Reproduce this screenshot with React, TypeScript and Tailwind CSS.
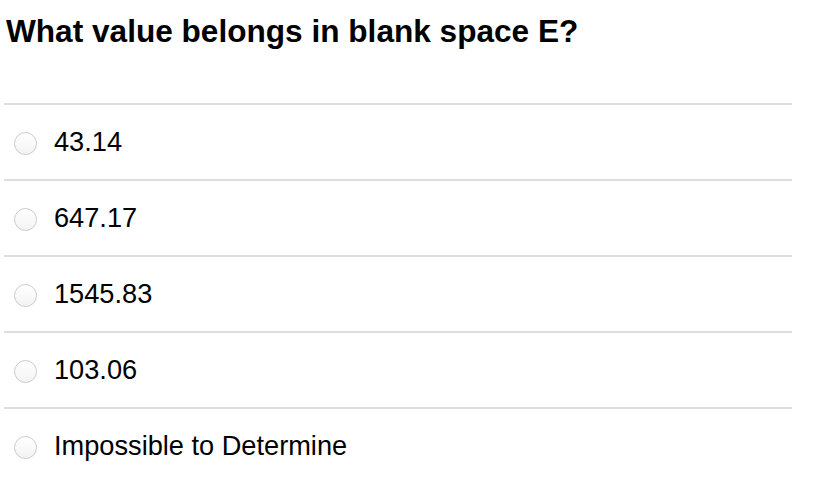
const options = ["43.14", "647.17", "1545.83", "103.06", "Impossible to Determine"];

export default function App() {
    return (
        <main className="w-[814px] h-[490px] bg-white text-black overflow-hidden font-['Liberation_Sans',Arial,sans-serif]">
            {/* Question */}
            <h1 className="pt-[13px] pl-[6px] text-[31.6px] leading-[37px] font-bold">
                What value belongs in blank space E?
            </h1>

            {/* Answers */}
            <ul className="mt-[53px] ml-1 w-[788px]">
                {options.map((opt) => (
                    <li
                        key={opt}
                        className="h-[76px] border-t-2 border-[#dedede] flex items-center"
                    >
                        <span className="ml-[10px] mt-[2px] w-[23px] h-[23px] rounded-full border border-[#cbcbcb] bg-gradient-to-b from-white to-[#f3f3f3]" />
                        <span className="ml-[17px] text-[27.2px] leading-[32px]">
                            {opt}
                        </span>
                    </li>
                ))}
            </ul>
        </main>
    );
}
